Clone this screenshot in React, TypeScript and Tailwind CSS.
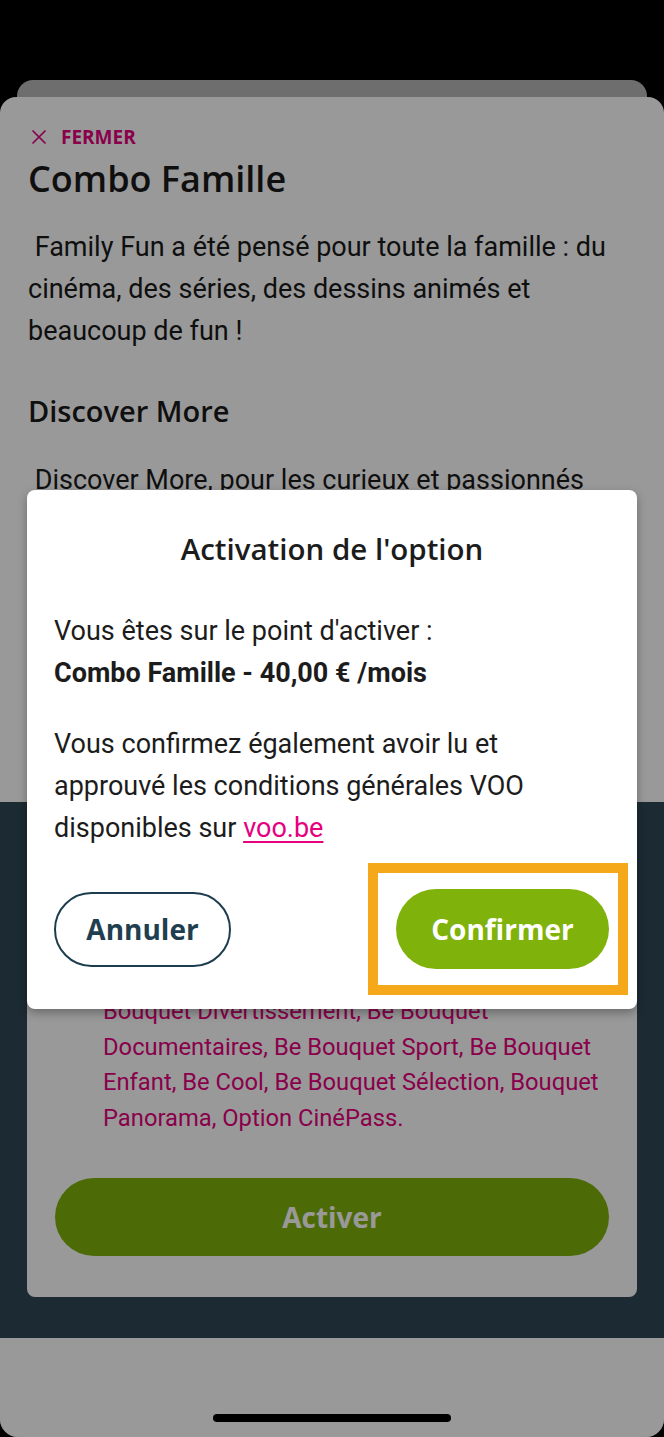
import React from "react";

const CloseIcon = () => (
  <svg width="14" height="14" viewBox="0 0 14 14" fill="none">
    <path d="M1 1L13 13M13 1L1 13" stroke="#e6007e" strokeWidth="1.7" strokeLinecap="round" />
  </svg>
);

const channels = [
  "Chaînes incluses : Be 1, Be Séries, Be Ciné,",
  "Be Bouquet Ciné, Be Bouquet Séries, Be",
  "Bouquet Famille, Be Bouquet Kids, Be",
  "Bouquet Musique, Be Bouquet Info, Be",
  "Bouquet Divertissement, Be Bouquet",
  "Documentaires, Be Bouquet Sport, Be Bouquet",
  "Enfant, Be Cool, Be Bouquet Sélection, Bouquet",
  "Panorama, Option CinéPass.",
];

const App = () => {
  return (
    <div className="min-h-screen bg-black flex justify-center">
      <div className="relative w-[664px] h-[1437px] overflow-hidden rounded-b-[18px] bg-black font-['Roboto',sans-serif]">
        {/* status bar */}
        <div className="h-[80px]" />

        {/* stacked sheet behind */}
        <div className="mx-[17px] h-[40px] rounded-t-[16px] bg-[#b8b8b8]" />

        {/* option sheet */}
        <div className="relative -mt-[23px] rounded-t-[16px] bg-white">
          <section className="h-[705px] overflow-hidden px-[28px] pt-[28px] text-[#1a1a1a]">
            <button className="flex items-center gap-[15px] pl-[4px] font-['Open_Sans',sans-serif] text-[19px] font-bold leading-[24px] text-[#e6007e]">
              <CloseIcon />
              FERMER
            </button>
            <h1 className="mt-[8px] font-['Open_Sans',sans-serif] text-[36px] font-semibold leading-[44px]">
              Combo Famille
            </h1>
            <p className="mt-[25px] text-[27px] leading-[42px] whitespace-nowrap">
              {"\u00A0"}Family Fun a été pensé pour toute la famille : du
              <br />
              cinéma, des séries, des dessins animés et
              <br />
              beaucoup de fun !
            </p>
            <h2 className="mt-[41px] font-['Open_Sans',sans-serif] text-[29px] font-semibold leading-[36px]">
              Discover More
            </h2>
            <p className="mt-[30px] text-[27px] leading-[42px] whitespace-nowrap">
              {"\u00A0"}Discover More, pour les curieux et passionnés
              <br />
              de découvertes : documentaires, nature,
              <br />
              histoire et voyages.
            </p>
          </section>

          <section className="bg-[#304655] px-[27px] pt-[20px] pb-[41px]">
            <div className="rounded-[8px] bg-white px-[28px] pt-[30px] pb-[41px]">
              <div className="pl-[48px] text-[23.75px] leading-[35.5px] text-[#e6007e]">
                {channels.map((line) => (
                  <div key={line} className="whitespace-nowrap">
                    {line}
                  </div>
                ))}
              </div>
              <button className="mt-[42px] flex h-[78px] w-full items-center justify-center rounded-full bg-[#7fb20a] font-['Open_Sans',sans-serif] text-[28px] font-bold text-white">
                Activer
              </button>
            </div>
          </section>

          <div className="flex h-[99px] items-end justify-center pb-[15px]">
            <div className="h-[8px] w-[238px] rounded-full bg-black" />
          </div>
        </div>

        {/* dim overlay */}
        <div className="absolute inset-0 bg-black/40" />

        {/* confirmation dialog */}
        <div className="absolute left-[27px] top-[490px] w-[610px] rounded-[8px] bg-white px-[27px] pt-[41px] pb-[40px] text-[#1c1c1c] shadow-[0_4px_10px_rgba(0,0,0,0.3)]">
          <h3 className="text-center font-['Open_Sans',sans-serif] text-[29.5px] font-semibold leading-[36px]">
            Activation de l'option
          </h3>
          <p className="mt-[43px] text-[27px] leading-[42px] whitespace-nowrap">
            Vous êtes sur le point d'activer :
            <br />
            <span className="font-bold">Combo Famille - 40,00 € /mois</span>
          </p>
          <p className="mt-[29px] text-[27px] leading-[42px] whitespace-nowrap">
            Vous confirmez également avoir lu et
            <br />
            approuvé les conditions générales VOO
            <br />
            disponibles sur{" "}
            <a className="text-[#e6007e] underline decoration-2 underline-offset-[4px]">voo.be</a>
          </p>

          <div className="mt-[40px] flex items-center justify-between pr-[1px]">
            <button className="flex h-[75px] w-[177px] items-center justify-center rounded-full border-2 border-[#1d3d4f] font-['Open_Sans',sans-serif] text-[28px] font-bold text-[#1f3f50]">
              Annuler
            </button>
            <div className="relative">
              <button className="flex h-[80px] w-[213px] items-center justify-center rounded-full bg-[#7fb20a] font-['Open_Sans',sans-serif] text-[28px] font-bold text-white">
                Confirmer
              </button>
              <div className="absolute -left-[28px] -right-[19px] -top-[26px] -bottom-[26px] border-[10px] border-[#f6a81b]" />
            </div>
          </div>
        </div>
      </div>
    </div>
  );
};

export default App;
